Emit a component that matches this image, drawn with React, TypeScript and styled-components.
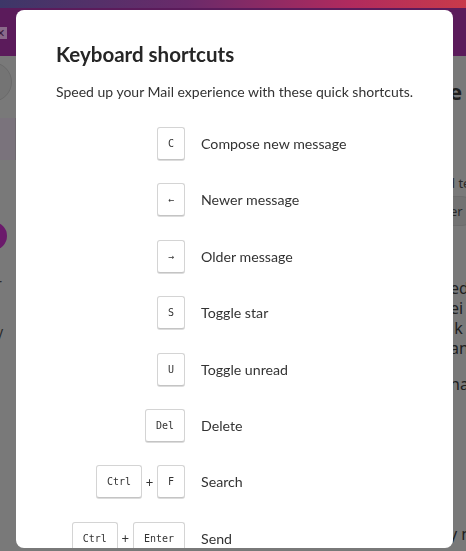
import styled, { createGlobalStyle } from 'styled-components';

const GlobalStyle = createGlobalStyle`
  html, body {
    margin: 0;
    padding: 0;
    width: 100%;
    height: 100%;
    overflow: hidden;
  }
  body {
    font-family: Lato, 'Noto Sans', sans-serif;
    background: #797979;
  }
`;

type Shortcut = { keys: string[]; label: string };

const shortcuts: Shortcut[] = [
  { keys: ['C'], label: 'Compose new message' },
  { keys: ['←'], label: 'Newer message' },
  { keys: ['→'], label: 'Older message' },
  { keys: ['S'], label: 'Toggle star' },
  { keys: ['U'], label: 'Toggle unread' },
  { keys: ['Del'], label: 'Delete' },
  { keys: ['Ctrl', 'F'], label: 'Search' },
  { keys: ['Ctrl', 'Enter'], label: 'Send' },
];

export default function App() {
  return (
    <>
      <GlobalStyle />
      <Page>
        <TopStrip />
        <Header>
          <CloseTab>✕</CloseTab>
        </Header>
        <Body>
          <Sidebar>
            <Avatar />
            <NavItem />
            <Dot />
            <SideLines>
              <SideText>r</SideText>
              <SideText>l</SideText>
              <SideText>y</SideText>
            </SideLines>
          </Sidebar>
          <Gutter />
          <RightPane>
            <Heading>e a</Heading>
            <Small>d te</Small>
            <Pill>er</Pill>
            <Para>
              <Line>ed</Line>
              <Line>ei</Line>
              <Line>&nbsp;k</Line>
              <Line>an</Line>
            </Para>
            <Para $top={16}>
              <Line>na</Line>
            </Para>
            <Tail>y n</Tail>
          </RightPane>
        </Body>
      </Page>

      <Modal role="dialog" aria-labelledby="kb-title">
        <Title id="kb-title">Keyboard shortcuts</Title>
        <Intro>Speed up your Mail experience with these quick shortcuts.</Intro>
        <List>
          {shortcuts.map(s => (
            <Row key={s.label}>
              <Keys>
                {s.keys.map((k, i) => (
                  <KeyGroup key={k}>
                    {i > 0 && <Plus>+</Plus>}
                    <Kbd>{k}</Kbd>
                  </KeyGroup>
                ))}
              </Keys>
              <Label>{s.label}</Label>
            </Row>
          ))}
        </List>
      </Modal>
    </>
  );
}

const Page = styled.div`
  width: 466px;
  height: 551px;
  display: flex;
  flex-direction: column;
  overflow: hidden;
`;

const TopStrip = styled.div`
  height: 8px;
  background: linear-gradient(90deg, #3d3768 0%, #6a2a6a 40%, #b02a5e 75%, #c83a4a 100%);
`;

const Header = styled.div`
  height: 48px;
  background: #5b1b5b;
  display: flex;
  align-items: flex-start;
`;

const CloseTab = styled.div`
  margin-top: 19px;
  width: 7px;
  height: 12px;
  overflow: hidden;
  background: #8a6a8a;
  color: #3a1a3a;
  font-size: 11px;
  line-height: 12px;
  text-indent: -4px;
`;

const Body = styled.div`
  flex: 1;
  display: flex;
`;

const Sidebar = styled.div`
  width: 16px;
  display: flex;
  flex-direction: column;
  overflow: hidden;
  color: #2a2a2a;
  font-family: 'Noto Sans', sans-serif;
  font-size: 14px;
`;

const Avatar = styled.div`
  margin: 6px 0 0 -28px;
  width: 38px;
  height: 38px;
  border-radius: 50%;
  background: #747474;
  border: 1px solid #6a6a6a;
`;

const NavItem = styled.div`
  margin-top: 16px;
  width: 15px;
  height: 42px;
  background: #7a737c;
  border-right: 1px solid #6f6a70;
`;

const Dot = styled.div`
  margin: 62px 0 0 -21px;
  width: 28px;
  height: 28px;
  border-radius: 50%;
  background: #6b1a6b;
`;

const SideLines = styled.div`
  margin-top: 22px;
  display: flex;
  flex-direction: column;
`;

const SideText = styled.div`
  line-height: 24px;
  margin-left: -4px;
`;

const Gutter = styled.div`
  width: 437px;
`;

const RightPane = styled.div`
  flex: 1;
  overflow: hidden;
  color: #202020;
  white-space: nowrap;
  display: flex;
  flex-direction: column;
  font-family: 'Noto Sans', sans-serif;
`;

const Heading = styled.div`
  margin-top: 22px;
  margin-left: -4px;
  font-size: 22px;
  font-weight: 700;
  line-height: 26px;
`;

const Small = styled.div`
  margin-top: 70px;
  margin-left: -6px;
  font-size: 13px;
  line-height: 18px;
  color: #2a2a2a;
`;

const Pill = styled.div`
  margin-top: 4px;
  margin-left: -16px;
  width: 40px;
  height: 30px;
  border-radius: 15px;
  background: #727272;
  border: 1px solid #6c6c6c;
  padding-left: 12px;
  box-sizing: border-box;
  font-size: 13px;
  line-height: 28px;
  color: #2a2a2a;
`;

const Para = styled.div<{ $top?: number }>`
  margin-top: ${p => p.$top ?? 52}px;
  margin-left: -3px;
  display: flex;
  flex-direction: column;
`;

const Line = styled.div`
  font-size: 16px;
  line-height: 20px;
`;

const Tail = styled.div`
  margin-top: 130px;
  margin-left: -4px;
  font-size: 16px;
  line-height: 20px;
`;

const Modal = styled.div`
  position: fixed;
  top: 10px;
  left: 16px;
  width: 437px;
  height: 538px;
  box-sizing: border-box;
  padding: 32px 40px;
  background: #ffffff;
  border-radius: 8px;
  overflow: hidden;
  color: #2e2e2e;
`;

const Title = styled.h2`
  margin: 0;
  font-size: 20.5px;
  line-height: 24px;
  font-weight: 700;
  color: #262626;
`;

const Intro = styled.p`
  margin: 16px 0 0;
  font-size: 14px;
  line-height: 20px;
  color: #333333;
  white-space: nowrap;
`;

const List = styled.div`
  margin-top: 25px;
  display: grid;
  grid-template-columns: 129px 1fr;
  column-gap: 16px;
  row-gap: 23.4px;
`;

const Row = styled.div`
  display: contents;
`;

const Keys = styled.div`
  display: flex;
  justify-content: flex-end;
  align-items: center;
`;

const KeyGroup = styled.div`
  display: flex;
  align-items: center;
`;

const Plus = styled.span`
  width: 15px;
  text-align: center;
  font-size: 13px;
  color: #333333;
`;

const Kbd = styled.kbd`
  display: inline-flex;
  align-items: center;
  justify-content: center;
  box-sizing: border-box;
  min-width: 27px;
  height: 33px;
  padding: 0 10px;
  border: 1px solid #d4d4d4;
  border-bottom-color: #c4c4c4;
  border-radius: 3px;
  box-shadow: 0 1px 0 #dcdcdc;
  background: #ffffff;
  font-family: 'DejaVu Sans Mono', 'Liberation Mono', monospace;
  font-size: 10px;
  color: #333333;
`;

const Label = styled.div`
  display: flex;
  align-items: center;
  height: 33px;
  font-size: 14.2px;
  color: #333333;
`;
